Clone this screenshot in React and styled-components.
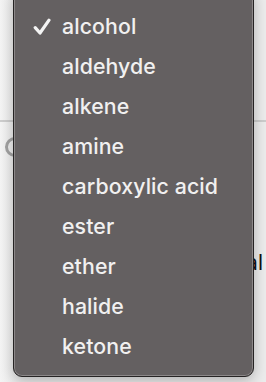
import React from 'react'
import styled, { createGlobalStyle } from 'styled-components'

const GlobalStyle = createGlobalStyle`
  html, body {
    margin: 0;
    padding: 0;
    background: #ececec;
    font-family: Inter, "Liberation Sans", sans-serif;
  }
`

const items = [
  'alcohol',
  'aldehyde',
  'alkene',
  'amine',
  'carboxylic acid',
  'ester',
  'ether',
  'halide',
  'ketone',
]

const App = () => {
  const [selected, setSelected] = React.useState('alcohol')

  return (
    <>
      <GlobalStyle />
      <Page>
        <Header />
        <FieldRow>
          <RadioRing />
        </FieldRow>
        <LabelRow>
          <Label>Functional</Label>
        </LabelRow>

        {/* popup menu sits over the form */}
        <Menu>
          {items.map((item) => (
            <Item key={item} onClick={() => setSelected(item)}>
              <CheckCol>
                {selected === item && (
                  <svg width="18" height="17" viewBox="0 0 18 17">
                    <path
                      d="M2.2 9.6 L7 15 L16 2.2"
                      fill="none"
                      stroke="#f4f4f4"
                      strokeWidth="3.2"
                      strokeLinecap="round"
                      strokeLinejoin="round"
                    />
                  </svg>
                )}
              </CheckCol>
              <ItemText>{item}</ItemText>
            </Item>
          ))}
        </Menu>
      </Page>
    </>
  )
}

export default App

const Page = styled.div`
  position: relative;
  width: 266px;
  height: 382px;
  overflow: hidden;
  background: linear-gradient(90deg, #f4f4f4 0%, #ececec 6%, #ececec 100%);
`

const Header = styled.div`
  height: 120px;
  border-bottom: 2px solid #cdcdcd;
`

const FieldRow = styled.div`
  display: flex;
  align-items: center;
  height: 50px;
  padding-left: 5px;
`

const RadioRing = styled.div`
  width: 14px;
  height: 14px;
  border: 3px solid #a3a3a3;
  border-radius: 50%;
`

const LabelRow = styled.div`
  display: flex;
  justify-content: flex-end;
  padding: 78px 3px 0 0;
`

const Label = styled.span`
  font-size: 21px;
  color: #111;
`

const Menu = styled.ul`
  position: absolute;
  left: 13px;
  top: -12px;
  width: 241px;
  height: 389px;
  box-sizing: border-box;
  margin: 0;
  padding: 17px 0 0;
  list-style: none;
  background: #646061;
  border: 1px solid #262424;
  border-radius: 9px;
  box-shadow: inset 0 0 0 1px #8c8889, 0 4px 14px rgba(0, 0, 0, 0.25);
`

const Item = styled.li`
  display: flex;
  align-items: center;
  height: 40px;
  cursor: default;
`

const CheckCol = styled.span`
  display: flex;
  align-items: center;
  justify-content: flex-end;
  width: 37px;
  padding-right: 11px;
`

const ItemText = styled.span`
  font-size: 21.3px;
  font-weight: 500;
  color: #f1f0f0;
  letter-spacing: 0.1px;
`
